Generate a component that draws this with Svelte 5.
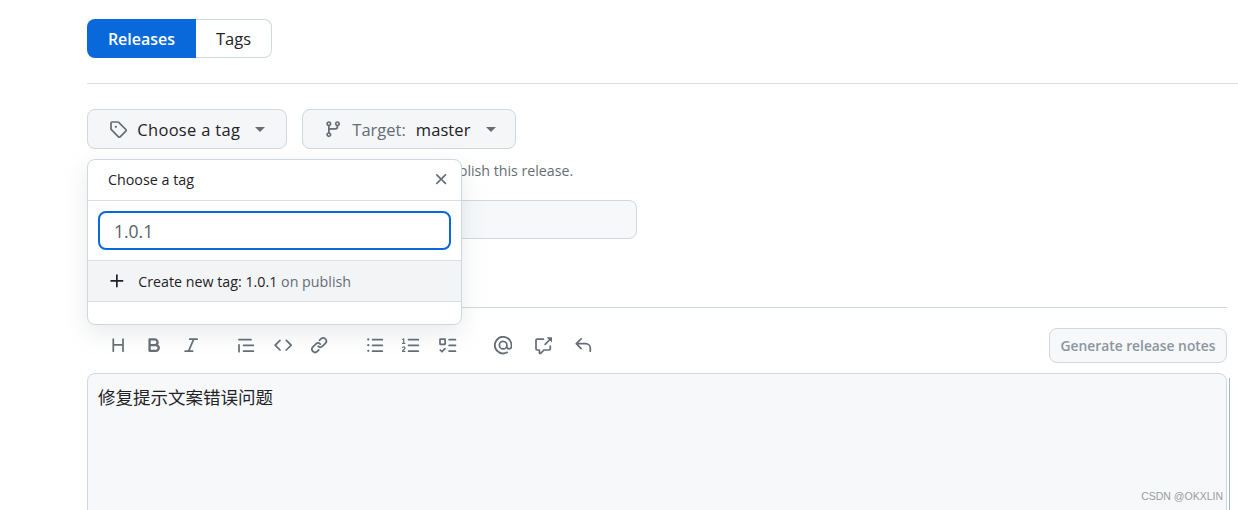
<script>
  const icons = {
    heading: 'M3.75 2a.75.75 0 0 1 .75.75V7h7V2.75a.75.75 0 0 1 1.5 0v10.5a.75.75 0 0 1-1.5 0V8.5h-7v4.75a.75.75 0 0 1-1.5 0V2.75A.75.75 0 0 1 3.75 2Z',
    bold: 'M4 2h4.5a3.501 3.501 0 0 1 2.852 5.53A3.499 3.499 0 0 1 9.5 14H4a1 1 0 0 1-1-1V3a1 1 0 0 1 1-1Zm1 7v3h4.5a1.5 1.5 0 0 0 0-3Zm3.5-2a1.5 1.5 0 0 0 0-3H5v3Z',
    italic: 'M6 2.75A.75.75 0 0 1 6.75 2h6.5a.75.75 0 0 1 0 1.5h-2.505l-3.858 9H9.25a.75.75 0 0 1 0 1.5h-6.5a.75.75 0 0 1 0-1.5h2.505l3.858-9H6.75A.75.75 0 0 1 6 2.75Z',
    quote: 'M1.75 2.5h10.5a.75.75 0 0 1 0 1.5H1.75a.75.75 0 0 1 0-1.5Zm4 5h8.5a.75.75 0 0 1 0 1.5h-8.5a.75.75 0 0 1 0-1.5Zm0 5h8.5a.75.75 0 0 1 0 1.5h-8.5a.75.75 0 0 1 0-1.5ZM2.5 7.75v6a.75.75 0 0 1-1.5 0v-6a.75.75 0 0 1 1.5 0Z',
    code: 'm11.28 3.22 4.25 4.25a.75.75 0 0 1 0 1.06l-4.25 4.25a.749.749 0 0 1-1.275-.326.749.749 0 0 1 .215-.734L13.94 8l-3.72-3.72a.749.749 0 0 1 .326-1.275.749.749 0 0 1 .734.215Zm-6.56 0a.751.751 0 0 1 1.042.018.751.751 0 0 1 .018 1.042L2.06 8l3.72 3.72a.749.749 0 0 1-.326 1.275.749.749 0 0 1-.734-.215L.47 8.53a.75.75 0 0 1 0-1.06Z',
    link: 'm7.775 3.275 1.25-1.25a3.5 3.5 0 1 1 4.95 4.95l-2.5 2.5a3.5 3.5 0 0 1-4.95 0 .751.751 0 0 1 .018-1.042.751.751 0 0 1 1.042-.018 1.998 1.998 0 0 0 2.83 0l2.5-2.5a2.002 2.002 0 0 0-2.83-2.83l-1.25 1.25a.751.751 0 0 1-1.042-.018.751.751 0 0 1-.018-1.042Zm-4.69 9.64a1.998 1.998 0 0 0 2.83 0l1.25-1.25a.751.751 0 0 1 1.042.018.751.751 0 0 1 .018 1.042l-1.25 1.25a3.5 3.5 0 1 1-4.95-4.95l2.5-2.5a3.5 3.5 0 0 1 4.95 0 .751.751 0 0 1-.018 1.042.751.751 0 0 1-1.042.018 1.998 1.998 0 0 0-2.83 0l-2.5 2.5a1.998 1.998 0 0 0 0 2.83Z',
    ul: 'M5.75 2.5h8.5a.75.75 0 0 1 0 1.5h-8.5a.75.75 0 0 1 0-1.5Zm0 5h8.5a.75.75 0 0 1 0 1.5h-8.5a.75.75 0 0 1 0-1.5Zm0 5h8.5a.75.75 0 0 1 0 1.5h-8.5a.75.75 0 0 1 0-1.5ZM2 14a1 1 0 1 1 0-2 1 1 0 0 1 0 2Zm1-6a1 1 0 1 1-2 0 1 1 0 0 1 2 0ZM2 4a1 1 0 1 1 0-2 1 1 0 0 1 0 2Z',
    ol: 'M5 3.25a.75.75 0 0 1 .75-.75h8.5a.75.75 0 0 1 0 1.5h-8.5A.75.75 0 0 1 5 3.25Zm0 5a.75.75 0 0 1 .75-.75h8.5a.75.75 0 0 1 0 1.5h-8.5A.75.75 0 0 1 5 8.25Zm0 5a.75.75 0 0 1 .75-.75h8.5a.75.75 0 0 1 0 1.5h-8.5a.75.75 0 0 1-.75-.75ZM.924 10.32a.5.5 0 0 1-.851-.525l.001-.001.001-.002.002-.004.007-.011c.097-.144.215-.273.348-.384.228-.19.588-.392 1.068-.392.468 0 .858.181 1.126.484.259.294.377.673.377 1.038 0 .987-.686 1.495-1.156 1.845l-.047.035c-.303.225-.522.4-.654.597h1.357a.5.5 0 0 1 0 1H.5a.5.5 0 0 1-.5-.5c0-1.005.692-1.52 1.167-1.875l.035-.025c.531-.396.8-.625.8-1.078a.57.57 0 0 0-.128-.376C1.806 10.068 1.695 10 1.5 10a.658.658 0 0 0-.429.163.835.835 0 0 0-.144.153ZM2.003 2.5V6h.503a.5.5 0 0 1 0 1H.5a.5.5 0 0 1 0-1h.503V3.308l-.28.14a.5.5 0 0 1-.446-.895l1.003-.5a.5.5 0 0 1 .723.447Z',
    tasks: 'M2 2h4a1 1 0 0 1 1 1v4a1 1 0 0 1-1 1H2a1 1 0 0 1-1-1V3a1 1 0 0 1 1-1Zm4.655 8.595a.75.75 0 0 1 0 1.06L4.03 14.28a.75.75 0 0 1-1.06 0l-1.5-1.5a.749.749 0 0 1 .326-1.275.749.749 0 0 1 .734.215l.97.97 2.095-2.095a.75.75 0 0 1 1.06 0ZM9.75 2.5h5.5a.75.75 0 0 1 0 1.5h-5.5a.75.75 0 0 1 0-1.5Zm0 5h5.5a.75.75 0 0 1 0 1.5h-5.5a.75.75 0 0 1 0-1.5Zm0 5h5.5a.75.75 0 0 1 0 1.5h-5.5a.75.75 0 0 1 0-1.5Zm-7.25-9v3h3v-3Z',
    mention: 'M4.75 2.37a6.501 6.501 0 0 0 6.5 11.26.75.75 0 0 1 .75 1.298A7.999 7.999 0 0 1 .989 4.148 8 8 0 0 1 16 7.75v1.5a2.75 2.75 0 0 1-5.072 1.475 3.999 3.999 0 0 1-6.65-4.19A4 4 0 0 1 12 8v1.25a1.25 1.25 0 0 0 2.5 0V7.867a6.5 6.5 0 0 0-9.75-5.496ZM10.5 8a2.5 2.5 0 1 0-5 0 2.5 2.5 0 0 0 5 0Z',
    xref: 'M2.75 3.5a.25.25 0 0 0-.25.25v7.5c0 .138.112.25.25.25h2a.75.75 0 0 1 .75.75v2.19l2.72-2.72a.749.749 0 0 1 .53-.22h4.5a.25.25 0 0 0 .25-.25v-2.5a.75.75 0 0 1 1.5 0v2.5A1.75 1.75 0 0 1 13.25 13H9.06l-2.573 2.573A1.458 1.458 0 0 1 4 14.543V13H2.75A1.75 1.75 0 0 1 1 11.25v-7.5C1 2.784 1.784 2 2.75 2h5.5a.75.75 0 0 1 0 1.5ZM16 1.25v4.146a.25.25 0 0 1-.427.177L14.03 4.03l-3.75 3.75a.749.749 0 0 1-1.275-.326.749.749 0 0 1 .215-.734l3.75-3.75-1.543-1.543A.25.25 0 0 1 11.604 1h4.146a.25.25 0 0 1 .25.25Z',
    reply: 'M6.78 1.97a.75.75 0 0 1 0 1.06L3.81 6h6.44A4.75 4.75 0 0 1 15 10.75v2.5a.75.75 0 0 1-1.5 0v-2.5a3.25 3.25 0 0 0-3.25-3.25H3.81l2.97 2.97a.749.749 0 0 1-.326 1.275.749.749 0 0 1-.734-.215L1.47 7.28a.75.75 0 0 1 0-1.06l4.25-4.25a.75.75 0 0 1 1.06 0Z',
    tag: 'M1 7.775V2.75C1 1.784 1.784 1 2.75 1h5.025c.464 0 .91.184 1.238.513l6.25 6.25a1.75 1.75 0 0 1 0 2.474l-5.026 5.026a1.75 1.75 0 0 1-2.474 0l-6.25-6.25A1.752 1.752 0 0 1 1 7.775Zm1.5 0c0 .066.026.13.073.177l6.25 6.25a.25.25 0 0 0 .354 0l5.025-5.025a.25.25 0 0 0 0-.354l-6.25-6.25a.25.25 0 0 0-.177-.073H2.75a.25.25 0 0 0-.25.25ZM6 5a1 1 0 1 1 0 2 1 1 0 0 1 0-2Z',
    branch: 'M9.5 3.25a2.25 2.25 0 1 1 3 2.122V6A2.5 2.5 0 0 1 10 8.5H6a1 1 0 0 0-1 1v1.128a2.251 2.251 0 1 1-1.5 0V5.372a2.25 2.25 0 1 1 1.5 0v1.836A2.493 2.493 0 0 1 6 7h4a1 1 0 0 0 1-1v-.628A2.25 2.25 0 0 1 9.5 3.25Zm-6 0a.75.75 0 1 0 1.5 0 .75.75 0 0 0-1.5 0Zm8.25-.75a.75.75 0 1 0 0 1.5.75.75 0 0 0 0-1.5ZM4.25 12a.75.75 0 1 0 0 1.5.75.75 0 0 0 0-1.5Z',
    x: 'M3.72 3.72a.75.75 0 0 1 1.06 0L8 6.94l3.22-3.22a.749.749 0 0 1 1.275.326.749.749 0 0 1-.215.734L9.06 8l3.22 3.22a.749.749 0 0 1-.326 1.275.749.749 0 0 1-.734-.215L8 9.06l-3.22 3.22a.751.751 0 0 1-1.042-.018.751.751 0 0 1-.018-1.042L6.94 8 3.72 4.78a.75.75 0 0 1 0-1.06Z',
    plus: 'M7.75 2a.75.75 0 0 1 .75.75V7h4.25a.75.75 0 0 1 0 1.5H8.5v4.25a.75.75 0 0 1-1.5 0V8.5H2.75a.75.75 0 0 1 0-1.5H7V2.75A.75.75 0 0 1 7.75 2Z'
  };

  const toolGroups = [
    ['heading', 'bold', 'italic'],
    ['quote', 'code', 'link'],
    ['ul', 'ol', 'tasks'],
    ['mention', 'xref', 'reply']
  ];
</script>

<main>
  <nav class="tabs">
    <span class="tab selected">Releases</span>
    <span class="tab">Tags</span>
  </nav>

  <hr class="rule" />

  <div class="pickers">
    <button class="picker tag-picker">
      <svg class="icon" viewBox="0 0 16 16"><path d={icons.tag} /></svg>
      <span class="strong wide">Choose a tag</span>
      <i class="caret"></i>
    </button>
    <button class="picker branch-picker">
      <svg class="icon" viewBox="0 0 16 16"><path d={icons.branch} /></svg>
      <span class="muted">Target:</span>
      <span class="strong">master</span>
      <i class="caret"></i>
    </button>

    <section class="popup">
      <header>
        <span>Choose a tag</span>
        <svg class="icon close" viewBox="0 0 16 16"><path d={icons.x} /></svg>
      </header>
      <div class="filter">
        <div class="filter-input">1.0.1</div>
      </div>
      <div class="create">
        <svg class="icon plus" viewBox="0 0 16 16"><path d={icons.plus} /></svg>
        <span>Create new tag: 1.0.1 <em>on publish</em></span>
      </div>
      <div class="popup-foot"></div>
    </section>
  </div>

  <p class="note">Choose an existing tag, or create a new tag when you publish this release.</p>

  <div class="title-input"></div>

  <div class="editor">
    <div class="toolbar">
      <div class="tools">
        {#each toolGroups as group, g}
          <div class="group" class:last={g === 3}>
            {#each group as name}
              <svg class="icon tool" viewBox="0 0 16 16"><path d={icons[name]} /></svg>
            {/each}
          </div>
        {/each}
      </div>
      <button class="generate">Generate release notes</button>
    </div>
    <div class="text-row">
      <div class="textarea">修复提示文案错误问题</div>
      <div class="resizer"></div>
    </div>
  </div>

  <span class="watermark">CSDN @OKXLIN</span>
</main>

<style>
  :global(body) {
    margin: 0;
    background: #fff;
    overflow: hidden;
  }

  main {
    position: relative;
    height: 510px;
    overflow: hidden;
    padding: 19px 0 0 87px;
    box-sizing: border-box;
    font-family: "Open Sans", "Noto Sans CJK SC", sans-serif;
    color: #1f2328;
  }

  .tabs {
    display: inline-flex;
    height: 39px;
    box-sizing: border-box;
    vertical-align: top;
  }

  .tab {
    display: flex;
    align-items: center;
    justify-content: center;
    width: 75px;
    border: 1px solid #d0d7de;
    border-left: 0;
    border-radius: 0 8px 8px 0;
    font-size: 16.5px;
    font-weight: 500;
  }

  .tab.selected {
    width: 109px;
    border: 0;
    border-radius: 8px 0 0 8px;
    background: #0969da;
    color: #fff;
    font-size: 16px;
    font-weight: 600;
  }

  .rule {
    margin: 25px 0 25px;
    border: 0;
    border-top: 1px solid #d8dee4;
  }

  .pickers {
    position: relative;
    display: flex;
    gap: 15px;
  }

  .picker {
    display: flex;
    align-items: center;
    height: 40px;
    padding: 0;
    box-sizing: border-box;
    border: 1px solid #d0d7de;
    border-radius: 8px;
    background: #f4f6f8;
    font: inherit;
    font-size: 16.5px;
  }

  .tag-picker {
    width: 200px;
    padding-left: 21px;
    gap: 10px;
  }

  .branch-picker {
    width: 214px;
    padding-left: 21px;
    gap: 10px;
  }

  .icon {
    flex: none;
    width: 18.3px;
    height: 18.3px;
    fill: #656d76;
  }

  .strong {
    font-weight: 500;
    letter-spacing: 0.1px;
    color: #1f2328;
  }

  .strong.wide {
    letter-spacing: 0.3px;
  }

  .muted {
    color: #656d76;
  }

  .caret {
    width: 0;
    height: 0;
    margin-left: 5px;
    border: 5px solid transparent;
    border-top-color: #656d76;
    border-bottom: 0;
  }

  .popup {
    position: absolute;
    z-index: 2;
    left: 0;
    top: 50px;
    width: 375px;
    height: 166px;
    box-sizing: border-box;
    border: 1px solid #d0d7de;
    border-radius: 8px;
    background: #fff;
    box-shadow: 0 8px 24px rgba(140, 149, 159, 0.2);
    overflow: hidden;
  }

  .popup header {
    display: flex;
    align-items: center;
    justify-content: space-between;
    height: 41px;
    padding: 0 11px 2px 20px;
    box-sizing: border-box;
    border-bottom: 1px solid #d8dee4;
    font-size: 14.3px;
    font-weight: 500;
  }

  .filter {
    height: 60px;
    padding: 10px;
    box-sizing: border-box;
    border-bottom: 1px solid #d8dee4;
  }

  .filter-input {
    height: 39px;
    padding-left: 14px;
    box-sizing: border-box;
    border: 2px solid #0969da;
    border-radius: 8px;
    font-size: 17.5px;
    line-height: 36px;
    color: #57606a;
  }

  .create {
    display: flex;
    align-items: center;
    gap: 12px;
    height: 41px;
    padding-left: 20px;
    box-sizing: border-box;
    border-bottom: 1px solid #d8dee4;
    background: #f3f4f6;
    font-size: 14.25px;
  }

  .plus {
    fill: #1f2328;
  }

  .create em {
    font-style: normal;
    color: #656d76;
  }

  .note {
    margin: 12px 0 0;
    height: 19px;
    font-size: 14.2px;
    line-height: 19px;
    color: #656d76;
  }

  .title-input {
    width: 550px;
    height: 39px;
    margin-top: 20px;
    box-sizing: border-box;
    border: 1px solid #d0d7de;
    border-radius: 8px;
    background: #f6f8fa;
  }

  .editor {
    width: 1140px;
    margin-top: 68px;
    border-top: 1px solid #d0d7de;
  }

  .toolbar {
    display: flex;
    align-items: center;
    justify-content: space-between;
    height: 55px;
    padding-top: 20px;
    box-sizing: border-box;
  }

  .tools {
    display: flex;
    gap: 37.5px;
    padding-left: 22px;
  }

  .group {
    display: flex;
    gap: 18px;
  }

  .group.last {
    gap: 21.7px;
  }

  .generate {
    width: 178px;
    height: 35px;
    padding: 0;
    box-sizing: border-box;
    border: 1px solid #d0d7de;
    border-radius: 8px;
    background: #f6f8fa;
    font: inherit;
    font-size: 13.8px;
    font-weight: 600;
    color: #8c959f;
  }

  .text-row {
    display: flex;
    margin-top: 10px;
  }

  .textarea {
    flex: none;
    width: 1140px;
    height: 180px;
    padding: 11px 10px;
    box-sizing: border-box;
    border: 1px solid #d0d7de;
    border-radius: 8px;
    background: #f6f8fa;
    font-size: 17.5px;
    line-height: 24px;
    color: #1f2328;
  }

  .resizer {
    flex: none;
    width: 1px;
    height: 180px;
    margin: 5px 0 0 2px;
    background: #9db8dc;
  }

  .watermark {
    position: absolute;
    right: 15px;
    bottom: 8px;
    font-family: "Liberation Sans", sans-serif;
    font-size: 10.5px;
    color: #9a9da1;
  }
</style>
